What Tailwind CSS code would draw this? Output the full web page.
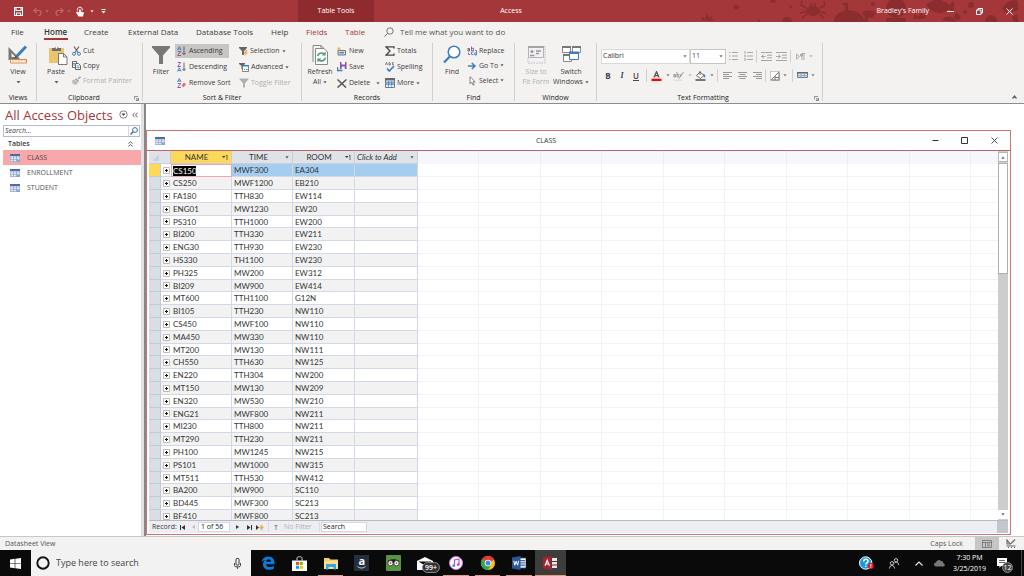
<!DOCTYPE html>
<html lang="en">
  <head>
    <meta charset="UTF-8" />
    <meta name="viewport" content="width=device-width, initial-scale=1.0" />
    <title>Access</title>
    <script src="https://cdn.jsdelivr.net/npm/@tailwindcss/browser@4"></script>
  </head>
  <body class="h-screen overflow-hidden flex flex-col bg-[#f3f2f1] font-['Open_Sans',sans-serif] text-[7px] leading-[10px] text-[#3b3b3b] whitespace-nowrap">
    <!-- shared icons -->
    <svg class="hidden">
      <symbol id="down" viewBox="0 0 5 3"><path d="M0.5 0h4L2.5 2.6z" fill="currentColor" fill-opacity=".8" /></symbol>
      <symbol id="sheet" viewBox="0 0 10 8">
        <path d="M0 0h10v8H0z" fill="#8ea6cc" />
        <path d="M0 0h10v2H0z" fill="#4a6ba3" />
        <path d="M.5 2.500h2.500v1H.5zM3.700 2.500h2.500v1H3.700zM7 2.500h2.500v1H7zM.5 4.300h2.500v1H.5zM3.700 4.300h2.500v1H3.700zM7 4.300h2.500v1H7zM.5 6.200h2.500v1H.5zM3.700 6.200h2.500v1H3.700z" fill="#fff" />
      </symbol>
      <symbol id="launch" viewBox="0 0 6 6"><path d="M.5 4V.5H5M2.500 2.500l2 2M5.500 2.500v3h-3z" fill="none" stroke="#666" stroke-width=".9" /></symbol>
      <symbol id="funnel" viewBox="0 0 20 20"><path d="M1 1h18v1.500l-7 8V19H8v-8.500L1 2.500z" fill="currentColor" /></symbol>
    </svg>

    <!-- title bar -->
    <header class="relative h-[22px] shrink-0 flex items-center bg-[#a4373a] text-white font-medium">
      <svg class="absolute right-0 top-0 w-[330px] h-[22px]" viewBox="0 0 330 22" fill="#8b2c2f">
        <circle cx="42" cy="7" r="2.500" /><circle cx="79" cy="0" r="3" /><circle cx="97" cy="7" r="1.500" /><circle cx="93" cy="22" r="5" /><circle cx="65" cy="21" r="1.500" />
        <path d="M8 20c-1-3 0-4 1-3l2 2 2-6 2 5 4-3-2 4 4 0-5 2z" />
        <ellipse cx="119" cy="11" rx="7" ry="5" /><path d="M112 8l-5-3 1-4M126 8l5-3-1-4M112 12l-6 1M113 14l-5 4M125 14l5 4M126 12l6 1M117 7V3M121 7V3" stroke="#8b2c2f" stroke-width="1.500" fill="none" />
        <path d="M140 20c2-8 8-8 11-9V5h-3V3h6v7c8 0 14 4 16 9l4-4v7h-34z" />
        <path d="M168 13c4-4 10-3 14 0l-4 5h-6z" />
        <circle cx="202" cy="8" r="10" /><circle cx="179" cy="4" r="2" /><path d="M192 18h20v4h-20z" />
        <path d="M219 19l2-6 3 4 4-5 1 4 4-2-3 5z" />
        <path d="M232 5c7-7 17-6 23 0l5-4v12l-5-4c-7 7-18 4-23-4z" />
        <path d="M262 12l5 5-3 4-4-3zM248 20a8 8 0 0 1 14 2z" />
        <circle cx="277" cy="5" r="3" /><circle cx="297" cy="21" r="6" /><circle cx="271" cy="12" r="2" />
        <path d="M308 9c4-9 12-10 16-8v9l-5 2-3-3-4 4zM318 17l5-3 2 8h-5z" />
      </svg>
      <div class="w-[298px] pl-[14px] flex items-center text-[#c97577]">
        <button class="w-[19px]" aria-label="Save">
          <svg class="w-[9px] h-[9px]" viewBox="0 0 9 9"><path d="M.5.5h8v8h-8zM2 .5v3h5v-3M2.500 8.500V6h4v2.500" fill="none" stroke="#fff" stroke-width="1.100" /></svg>
        </button>
        <button class="w-[22px] flex items-center gap-[3px]" aria-label="Undo">
          <svg class="w-[9px] h-[9px]" viewBox="0 0 9 9"><path d="M3.500 1L1 3.500 3.500 6M1 3.500h4.500a2.300 2.300 0 0 1 0 5" fill="none" stroke="#c3686a" stroke-width="1.200" /></svg>
          <svg class="w-[4px] h-[3px]"><use href="#down" /></svg>
        </button>
        <button class="w-[21px] flex items-center gap-[3px]" aria-label="Redo">
          <svg class="w-[9px] h-[9px]" viewBox="0 0 9 9"><path d="M5.500 1L8 3.500 5.500 6M8 3.500H3.500a2.300 2.300 0 0 0 0 5" fill="none" stroke="#c3686a" stroke-width="1.200" /></svg>
          <svg class="w-[4px] h-[3px]"><use href="#down" /></svg>
        </button>
        <button class="w-[25px] flex items-center gap-[6px] text-white" aria-label="Touch mode">
          <svg class="w-[8px] h-[11px]" viewBox="0 0 8 11"><path d="M3 3.500v3L1 5.500 0 6.500 2.500 10.500h4.500L8 6.500 4.800 5.500v-2z" fill="#fff" /><path d="M1.500 4.500a2.500 2.500 0 1 1 4.700 0" fill="none" stroke="#fff" /></svg>
          <svg class="w-[4px] h-[3px]"><use href="#down" /></svg>
        </button>
        <button class="text-white" aria-label="Customize">
          <svg class="w-[5px] h-[5px]" viewBox="0 0 5 5"><path d="M.5 0h4v1h-4zM.5 2h4l-2 2.600z" fill="#fff" /></svg>
        </button>
      </div>
      <div class="w-[76px] h-full flex items-center justify-center bg-[#8f2b2e]">Table Tools</div>
      <div class="w-[274px] text-center">Access</div>
      <div class="relative ml-auto flex items-center">
        <span>Bradley's Family</span>
        <button class="w-[30px] ml-[6px] flex justify-center" aria-label="Minimize"><svg class="w-[7px] h-[7px]" viewBox="0 0 7 7"><path d="M0 3.500h7" stroke="#fff" /></svg></button>
        <button class="w-[29px] flex justify-center" aria-label="Restore"><svg class="w-[7px] h-[7px]" viewBox="0 0 7 7"><path d="M.5 2h4.500v4.500H.5zM2 2V.5h4.500V5H5" fill="none" stroke="#fff" /></svg></button>
        <button class="w-[30px] flex justify-center" aria-label="Close"><svg class="w-[7px] h-[7px]" viewBox="0 0 7 7"><path d="M.5.5l6 6M6.500.5l-6 6" stroke="#fff" /></svg></button>
      </div>
    </header>

    <!-- ribbon tabs -->
    <nav class="h-[21px] shrink-0 flex items-center pl-[11px] pb-[2px] text-[8px]">
      <a href="#" class="w-[33px]">File</a>
      <a href="#" class="relative w-[40px] font-semibold text-[#333]">Home<span class="absolute left-0 -bottom-[3px] w-[24px] h-[2px] bg-[#a4373a]"></span></a>
      <a href="#" class="w-[44px]">Create</a>
      <a href="#" class="w-[68px]">External Data</a>
      <a href="#" class="w-[75px]">Database Tools</a>
      <a href="#" class="w-[35px]">Help</a>
      <a href="#" class="w-[39px] text-[#a4373a]">Fields</a>
      <a href="#" class="w-[39px] text-[#a4373a]">Table</a>
      <label class="flex items-center gap-[6px]">
        <svg class="w-[10px] h-[10px]" viewBox="0 0 10 10"><circle cx="6" cy="4" r="3.200" fill="none" stroke="#666" stroke-width=".9" /><path d="M3.700 6.300L.5 9.500" stroke="#666" /></svg>
        <input class="w-[130px] placeholder:text-[#555]" placeholder="Tell me what you want to do" />
      </label>
    </nav>

    <!-- ribbon -->
    <div class="relative h-[61px] shrink-0 flex border-b border-[#8c8c8c]">
      <section class="w-[37px] h-[58px] border-r border-[#d2d0ce]">
        <div class="h-[50px] flex">
          <button class="w-full h-[42px] pt-[2px] flex flex-col items-center">
            <svg class="w-[20px] h-[19px] shrink-0" viewBox="0 0 20 19">
              <path d="M.5 2v13H13z" fill="#777" /><path d="M3.500 8v4H7.500z" fill="#f3f2f1" />
              <path d="M18 1.500L8.500 11.500" stroke="#3e7ebf" stroke-width="3" /><path d="M7.500 10.500L6 14l3.500-1.500z" fill="#555" />
              <path d="M2.500 14.500h16v3.500h-16z" fill="#fff" stroke="#e0883a" /><path d="M5 15v2M8 15v1.500M11 15v2M14 15v1.500M17 15v1.500" stroke="#e0883a" stroke-width=".8" />
            </svg>
            <span class="mt-[3px]">View</span><svg class="w-[5px] h-[3px] mt-[4px]"><use href="#down" /></svg>
          </button>
        </div>
        <h2 class="text-center text-[#222]">Views</h2>
      </section>

      <section class="relative w-[106px] h-[58px] border-r border-[#d2d0ce]">
        <div class="h-[50px] flex">
          <button class="w-[26px] h-[42px] ml-[6px] pt-[2px] flex flex-col items-center">
            <svg class="w-[20px] h-[20px] shrink-0 ml-[3px]" viewBox="0 0 20 20">
              <path d="M1 3h15v15H1z" fill="#ecc36e" /><path d="M4 3h2.500a2.200 2.200 0 0 1 4 0H13v3H4z" fill="#6d6d6d" /><circle cx="8.500" cy="2.700" r="1" fill="#fff" />
              <path d="M10.500 8.500h5l3.500 3.500v7.500h-8.500z" fill="#fff" stroke="#777" /><path d="M15.500 8.500V12H19" fill="none" stroke="#777" />
            </svg>
            <span class="mt-[2px]">Paste</span><svg class="w-[5px] h-[3px] mt-[4px]"><use href="#down" /></svg>
          </button>
          <div class="ml-[3px] flex flex-col">
            <button class="h-[15px] flex items-center gap-[2px]">
              <svg class="w-[9px] h-[10px]" viewBox="0 0 9 10"><path d="M2 .5l4 6M7 .5L3 6.500" stroke="#666" stroke-width="1.200" /><circle cx="2" cy="7.800" r="1.500" fill="none" stroke="#3e7ebf" /><circle cx="7" cy="7.800" r="1.500" fill="none" stroke="#3e7ebf" /></svg>Cut
            </button>
            <button class="h-[15px] flex items-center gap-[2px]">
              <svg class="w-[9px] h-[9px]" viewBox="0 0 9 9"><path d="M.5.5h4v6h-4z" fill="#fff" stroke="#666" /><path d="M3.500 2.500h3l2 2v4h-5z" fill="#fff" stroke="#666" /><path d="M1 2.500h2M1 4h2M4.500 5h3M4.500 6.700h3" stroke="#3e7ebf" stroke-width=".8" /></svg>Copy
            </button>
            <button class="h-[15px] flex items-center gap-[2px] text-[#b1afad]">
              <svg class="w-[9px] h-[9px]" viewBox="0 0 9 9"><path d="M8 0L9 1.500 6.500 3.500 5.500 2.500z" fill="#aaa" /><path d="M4 2.500l3 2.500-.5 1L3 3.200z" fill="#888" /><path d="M0 4.500l2.500-1 3.500 3L4 9 .5 7.500z" fill="#bbb" /></svg>Format Painter
            </button>
          </div>
        </div>
        <h2 class="w-[94px] text-center text-[#222]">Clipboard</h2>
        <button class="absolute right-[3px] bottom-0" aria-label="Clipboard options"><svg class="w-[5px] h-[5px]"><use href="#launch" /></svg></button>
      </section>

      <section class="w-[159px] h-[58px] border-r border-[#d2d0ce]">
        <div class="h-[50px] flex">
          <button class="w-[26px] h-[42px] ml-[5px] pt-[2px] flex flex-col items-center">
            <svg class="w-[20px] h-[20px] shrink-0 text-[#777]"><use href="#funnel" /></svg>
            <span class="mt-[2px]">Filter</span>
          </button>
          <div class="w-[54px] ml-px pt-px flex flex-col gap-[2px]">
            <button class="h-[14px] pl-[2px] flex items-center gap-[3px] bg-[#c8c6c4]">
              <svg class="w-[9px] h-[10px] shrink-0" viewBox="0 0 9 10"><path d="M.5 4L2.300.5 4 4M1 3h2.500" fill="none" stroke="#3e7ebf" stroke-width=".9" /><path d="M.7 5.500h3L.7 9.500h3.300" fill="none" stroke="#8a4fa8" stroke-width=".9" /><path d="M7 .5v8M5.300 6.700L7 8.700l1.700-2" fill="none" stroke="#555" stroke-width=".9" /></svg>Ascending
            </button>
            <button class="h-[14px] pl-[2px] flex items-center gap-[3px]">
              <svg class="w-[9px] h-[10px] shrink-0" viewBox="0 0 9 10"><path d="M.7.5h3L.7 4.500h3.300" fill="none" stroke="#8a4fa8" stroke-width=".9" /><path d="M.5 9.500L2.300 5.800 4 9.500M1 8.500h2.500" fill="none" stroke="#3e7ebf" stroke-width=".9" /><path d="M7 .5v8M5.300 6.700L7 8.700l1.700-2" fill="none" stroke="#555" stroke-width=".9" /></svg>Descending
            </button>
            <button class="h-[14px] pl-[2px] flex items-center gap-[3px]">
              <svg class="w-[9px] h-[10px] shrink-0" viewBox="0 0 9 10"><path d="M.5 4L2.300.5 4 4M1 3h2.500" fill="none" stroke="#3e7ebf" stroke-width=".9" /><path d="M.7 5.500h3L.7 9.500h3.300" fill="none" stroke="#8a4fa8" stroke-width=".9" /><path d="M4.500 7.500L7 4.500l2 1.700-2.500 3z" fill="#e8677d" /></svg>Remove Sort
            </button>
          </div>
          <div class="ml-[10px] pt-px flex flex-col gap-[2px]">
            <button class="h-[14px] flex items-center gap-[2px]">
              <svg class="w-[9px] h-[9px]" viewBox="0 0 9 9"><path d="M0 0h8v1L5 4v4H3V4L0 1z" fill="#666" /><path d="M7 3L4.500 6.500h2L5 9.500 9 5.500H7L8.500 3z" fill="#f0a23c" /></svg>Selection<svg class="w-[4px] h-[3px]"><use href="#down" /></svg>
            </button>
            <button class="h-[14px] flex items-center gap-[2px]">
              <svg class="w-[10px] h-[9px]" viewBox="0 0 10 9"><path d="M0 0h6v1L4 3v3H2.500V3L0 1z" fill="#666" /><path d="M3.500 2.500h6v6h-6z" fill="#fff" stroke="#666" stroke-width=".8" /><path d="M3 2h7v1.500H3z" fill="#3e7ebf" /><path d="M5 6.500h1M7 6.500h1.500" stroke="#3e7ebf" /></svg>Advanced<svg class="w-[4px] h-[3px]"><use href="#down" /></svg>
            </button>
            <button class="h-[14px] flex items-center gap-[2px] text-[#b1afad]">
              <svg class="w-[10px] h-[10px]"><use href="#funnel" /></svg>Toggle Filter
            </button>
          </div>
        </div>
        <h2 class="text-center text-[#222]">Sort &amp; Filter</h2>
      </section>

      <section class="w-[131px] h-[58px] border-r border-[#d2d0ce]">
        <div class="h-[50px] flex">
          <button class="w-[28px] h-[45px] ml-[4px] pt-[2px] flex flex-col items-center">
            <svg class="w-[17px] h-[20px] shrink-0" viewBox="0 0 17 20">
              <path d="M1 17V.5h8l3 3M9 .5V4" fill="none" stroke="#888" /><path d="M3.500 3.500H12l3.500 3.500v12.500h-12z" fill="#fff" stroke="#888" />
              <path d="M5.500 11a4 4 0 0 1 6.500-2M13.500 12.500a4 4 0 0 1-6.500 2.500" fill="none" stroke="#4f9b7c" stroke-width="1.700" /><path d="M13.700 6.500v4H9.800zM5.300 17.500v-4h4z" fill="#4f9b7c" />
            </svg>
            <span class="mt-[2px]">Refresh</span><span class="flex items-center gap-[2px]">All<svg class="w-[4px] h-[3px]"><use href="#down" /></svg></span>
          </button>
          <div class="w-[48px] ml-[3px] pt-px flex flex-col gap-[2px]">
            <button class="h-[14px] flex items-center gap-[3px]">
              <svg class="w-[9px] h-[9px]" viewBox="0 0 9 9"><path d="M1 3.500h7.500v4.500H1z" fill="#cfe0f1" stroke="#666" stroke-width=".9" /><path d="M2.500 5.700h4.500" stroke="#3e7ebf" stroke-width="1.300" /><path d="M2 0v4M0 2h4M.6.6l2.800 2.800M3.400.6L.6 3.400" stroke="#eaa64b" stroke-width=".7" /></svg>New
            </button>
            <button class="h-[14px] flex items-center gap-[2px]">
              <svg class="w-[10px] h-[10px]" viewBox="0 0 10 10"><path d="M3 0h6.500v7H3z" fill="#8750a8" /><path d="M4.500 0h3.500v2.500H4.500zM4.700 4.500h3V7h-3z" fill="#fff" /><path d="M.5 5v3.500h5" fill="none" stroke="#3e7ebf" stroke-width="1.400" /></svg>Save
            </button>
            <button class="h-[14px] flex items-center gap-[2px]">
              <svg class="w-[10px] h-[9px]" viewBox="0 0 10 9"><path d="M.5.5l8.500 8M9.500.5L.5 8.500" stroke="#555" stroke-width="1.500" /></svg>Delete<svg class="w-[4px] h-[3px] ml-[4px] shrink-0"><use href="#down" /></svg>
            </button>
          </div>
          <div class="pt-px flex flex-col gap-[2px]">
            <button class="h-[14px] flex items-center gap-[2px]">
              <svg class="w-[10px] h-[10px]" viewBox="0 0 10 10"><path d="M9 2.500V.8H1L5 5 1 9.200h8V7.500" fill="none" stroke="#444" stroke-width="1.300" /></svg>Totals
            </button>
            <button class="h-[14px] flex items-center gap-[2px]">
              <svg class="w-[10px] h-[10px]" viewBox="0 0 10 10"><path d="M.5 3L1.500.5 2.500 3M4 .5v2.500h1.300L5.500 1.700 4.800.5zM9 .7H7.500v2H9" fill="none" stroke="#555" stroke-width=".7" /><path d="M2 6.500L4.300 9 9 4" fill="none" stroke="#3e7ebf" stroke-width="1.700" /></svg>Spelling
            </button>
            <button class="h-[14px] flex items-center gap-[2px]">
              <svg class="w-[10px] h-[10px]" viewBox="0 0 10 10"><path d="M.5.5h9v9h-9z" fill="#fff" stroke="#777" /><path d="M0 0h10v2.500H0z" fill="#666" /><path d="M1 4h8v2.500H1z" fill="#8db9e2" /><path d="M0 4h10M0 6.700h10M3.500 3v7M6.700 3v7" stroke="#3e7ebf" stroke-width=".7" /></svg>More<svg class="w-[4px] h-[3px]"><use href="#down" /></svg>
            </button>
          </div>
        </div>
        <h2 class="text-center text-[#222]">Records</h2>
      </section>

      <section class="w-[82px] h-[58px] border-r border-[#d2d0ce]">
        <div class="h-[50px] flex">
          <button class="w-[26px] h-[42px] ml-[6px] pt-[2px] flex flex-col items-center">
            <svg class="w-[18px] h-[19px] shrink-0" viewBox="0 0 18 19"><circle cx="11" cy="7" r="5.800" fill="#fff" stroke="#3e7ebf" stroke-width="1.500" /><path d="M6.800 11.500L1 17.500" stroke="#3e7ebf" stroke-width="2.300" /></svg>
            <span class="mt-[3px]">Find</span>
          </button>
          <div class="ml-[2px] flex flex-col">
            <button class="h-[15px] flex items-center gap-[2px]">
              <svg class="w-[10px] h-[10px]" viewBox="0 0 10 10"><path d="M.5 2.500h2V5H.8V3.800h1.700" fill="none" stroke="#555" stroke-width=".8" /><path d="M4.500.5v4.300h2v-2.500h-2M1.500 6.500v2h1.500" fill="none" stroke="#8750a8" stroke-width=".9" /><path d="M6.500 6h-2v2.500h2M8 4.500h1.500V9H7.800V7h1.500" fill="none" stroke="#3e7ebf" stroke-width=".9" /></svg>Replace
            </button>
            <button class="h-[15px] flex items-center gap-[2px]">
              <svg class="w-[10px] h-[8px]" viewBox="0 0 10 8"><path d="M1 4h6.500M4.800 1L8 4 4.800 7" fill="none" stroke="#3e7ebf" stroke-width="1.500" /></svg>Go To<svg class="w-[4px] h-[3px]"><use href="#down" /></svg>
            </button>
            <button class="h-[15px] flex items-center gap-[2px]">
              <svg class="w-[10px] h-[10px]" viewBox="0 0 10 10"><path d="M3 .7v7l1.700-1.500 1.300 3 1.200-.6-1.200-2.800h2.200z" fill="#fff" stroke="#666" stroke-width=".8" /></svg>Select<svg class="w-[4px] h-[3px]"><use href="#down" /></svg>
            </button>
          </div>
        </div>
        <h2 class="text-center text-[#222]">Find</h2>
      </section>

      <section class="w-[82px] h-[58px] border-r border-[#d2d0ce]">
        <div class="h-[50px] flex">
          <button class="w-[32px] h-[45px] ml-[5px] pt-[2px] flex flex-col items-center text-[#b1afad]">
            <svg class="w-[19px] h-[19px] shrink-0" viewBox="0 0 19 19"><path d="M1.500 1.500h15v11h-15z" fill="#f3eff3" stroke="#b5b3b5" /><path d="M1 1h16v2H1z" fill="#a5a3a5" /><circle cx="5" cy="6.500" r="1.500" fill="#999" /><path d="M3 10.500h4.500M9 6h5M9 8.500h3" stroke="#999" stroke-width="1.300" /><path d="M18 1v17H1V13" fill="none" stroke="#c3a9c6" stroke-dasharray="1.500 1.200" /></svg>
            <span class="mt-[3px]">Size to</span><span>Fit Form</span>
          </button>
          <button class="w-[38px] h-[45px] pt-[2px] flex flex-col items-center">
            <svg class="w-[19px] h-[19px] shrink-0" viewBox="0 0 19 19"><path d="M.5 1.500h8v6h-8zM10.500 1.500h8v6h-8zM1.500 9.500h8v7h-8z" fill="#fff" stroke="#888" /><path d="M0 1h9v2H0zM10 1h9v2h-9zM1 9h8v2H1z" fill="#777" /><path d="M7.500 7.500h9v7h-9z" fill="#fff" stroke="#3e7ebf" /><path d="M7 6.500h10V9H7z" fill="#3e7ebf" /></svg>
            <span class="mt-[3px]">Switch</span><span class="flex items-center gap-[2px]">Windows<svg class="w-[4px] h-[3px]"><use href="#down" /></svg></span>
          </button>
        </div>
        <h2 class="text-center text-[#222]">Window</h2>
      </section>

      <section class="relative w-[226px] h-[58px] border-r border-[#d2d0ce]">
        <div class="h-[50px] pl-[4px] pt-[5px] flex flex-col gap-[5px]">
          <div class="flex items-center h-[16px] text-[#a8a6a4]">
            <div class="relative w-[89px]">
              <select aria-label="Font" class="appearance-none w-full h-[15px] pl-px bg-white border border-[#dcdad8] text-[#333]"><option>Calibri</option></select>
              <svg class="absolute right-[3px] top-[6px] w-[4px] h-[3px] text-[#555]"><use href="#down" /></svg>
            </div>
            <div class="relative w-[36px]">
              <select aria-label="Font size" class="appearance-none w-full h-[15px] pl-px bg-white border border-[#c8c6c4] text-[#60386f]"><option>11</option></select>
              <svg class="absolute right-[3px] top-[6px] w-[4px] h-[3px] text-[#555]"><use href="#down" /></svg>
            </div>
            <button class="w-[15px] flex justify-center" aria-label="Bullets"><svg class="w-[9px] h-[10px]" viewBox="0 0 9 10"><path d="M0 1.500h1.500M0 5h1.500M0 8.500h1.500M3 1.500h6M3 5h6M3 8.500h6" stroke="currentColor" /></svg></button>
            <button class="w-[15px] flex justify-center" aria-label="Numbering"><svg class="w-[9px] h-[10px]" viewBox="0 0 9 10"><path d="M1 0v2.700M.3 4.200h1v1.500h-1M.3 7.500h1v2h-1M3 1.500h6M3 5h6M3 8.500h6" fill="none" stroke="currentColor" /></svg></button>
            <span class="w-px h-[13px] mr-[2px] bg-[#d2d0ce]"></span>
            <button class="w-[15px] flex justify-center" aria-label="Decrease indent"><svg class="w-[11px] h-[9px]" viewBox="0 0 11 9"><path d="M0 .5h11M6 3.200h5M6 5.800h5M0 8.500h11M0 4.500h4.500M2.500 2.500l-2 2 2 2" fill="none" stroke="currentColor" /></svg></button>
            <button class="w-[15px] flex justify-center" aria-label="Increase indent"><svg class="w-[11px] h-[9px]" viewBox="0 0 11 9"><path d="M0 .5h11M6 3.200h5M6 5.800h5M0 8.500h11M0 4.500h4.500M2.500 2.500l2 2-2 2" fill="none" stroke="currentColor" /></svg></button>
            <span class="w-px h-[13px] mx-px bg-[#d2d0ce]"></span>
            <button class="w-[21px] pl-[4px] flex items-center justify-between" aria-label="Text direction"><svg class="w-[9px] h-[7px]" viewBox="0 0 9 7"><path d="M.5 1v5l3-2.500zM6 7V.5H9M8 7V.5" fill="none" stroke="currentColor" stroke-width=".9" /><circle cx="5.500" cy="2" r="1.500" fill="currentColor" /></svg><svg class="w-[4px] h-[3px]"><use href="#down" /></svg></button>
          </div>
          <div class="flex items-center h-[13px] text-[#666]">
            <button class="w-[14px] font-bold text-[8px] text-[#444]">B</button>
            <button class="w-[14px] font-bold italic text-[8px] text-[#444] font-['Liberation_Serif',serif]">I</button>
            <button class="w-[14px] font-semibold underline text-[8px] text-[#444]">U</button>
            <span class="w-px h-[13px] ml-[3px] mr-[4px] bg-[#d2d0ce]"></span>
            <button class="w-[22px] flex items-center gap-[4px]" aria-label="Font color"><svg class="w-[11px] h-[10px]" viewBox="0 0 11 10"><path d="M3 6.500L5.500.7 8 6.500M4 4.700h3" fill="none" stroke="#555" stroke-width="1.300" /><path d="M.5 7.700h10V10H.5z" fill="#f00" /></svg><svg class="w-[4px] h-[3px]"><use href="#down" /></svg></button>
            <button class="w-[22px] flex items-center gap-[4px] text-[#b1afad]" aria-label="Highlight"><svg class="w-[11px] h-[10px]" viewBox="0 0 11 10"><path d="M.5 3.500h2V6H.8V4.800h1.700M4 1v5h1.700V3.500H4M7 3l1 2.500M10.500 1L6 7.500" fill="none" stroke="#999" /><path d="M.5 8.500h9V10h-9z" fill="#e3e1df" /></svg><svg class="w-[4px] h-[3px]"><use href="#down" /></svg></button>
            <button class="w-[22px] flex items-center gap-[4px]" aria-label="Fill color"><svg class="w-[11px] h-[10px]" viewBox="0 0 11 10"><path d="M5 1l4 3.500L5.500 7.500 1.500 4.500z" fill="#fff" stroke="#666" /><path d="M5 0v4" stroke="#666" /><path d="M8.500 2.500c2 1 2 3 1.500 4.500L8.500 5z" fill="#3e7ebf" /><path d="M.5 8h10v2H.5z" fill="#777" /></svg><svg class="w-[4px] h-[3px]"><use href="#down" /></svg></button>
            <span class="w-px h-[13px] mr-[2px] bg-[#d2d0ce]"></span>
            <button class="w-[15px] flex justify-center" aria-label="Align left"><svg class="w-[9px] h-[7px]" viewBox="0 0 9 7"><path d="M0 .5h9M0 2.500h6M0 4.500h9M0 6.500h6" stroke="#999" /></svg></button>
            <button class="w-[15px] flex justify-center" aria-label="Center"><svg class="w-[9px] h-[7px]" viewBox="0 0 9 7"><path d="M0 .5h9M1.500 2.500h6M0 4.500h9M1.500 6.500h6" stroke="#999" /></svg></button>
            <button class="w-[15px] flex justify-center" aria-label="Align right"><svg class="w-[9px] h-[7px]" viewBox="0 0 9 7"><path d="M0 .5h9M3 2.500h6M0 4.500h9M3 6.500h6" stroke="#999" /></svg></button>
            <span class="w-px h-[13px] mr-[4px] bg-[#d2d0ce]"></span>
            <button class="w-[22px] flex items-center gap-[3px]" aria-label="Gridlines"><svg class="w-[10px] h-[10px]" viewBox="0 0 10 10"><path d="M.5.5h9v9h-9z" fill="#fff" stroke="#999" stroke-dasharray="1 1" /><path d="M1 9L9 1M9 2v7H2M5 5v4M5 6.500h4" fill="none" stroke="#777" /></svg><svg class="w-[4px] h-[3px]"><use href="#down" /></svg></button>
            <span class="w-px h-[13px] mr-[4px] bg-[#d2d0ce]"></span>
            <button class="w-[22px] flex items-center gap-[3px]" aria-label="Alternate row color"><svg class="w-[11px] h-[10px]" viewBox="0 0 11 10"><path d="M.5 1.500h10v5H.5z" fill="#cfe0f1" stroke="#777" /><path d="M0 1h11v1.500H0z" fill="#666" /><path d="M0 4.500h11M4 2v5M7.500 2v5" stroke="#7c9cc0" stroke-width=".7" /></svg><svg class="w-[4px] h-[3px]"><use href="#down" /></svg></button>
          </div>
        </div>
        <h2 class="w-[212px] text-center text-[#222]">Text Formatting</h2>
        <button class="absolute right-[3px] bottom-0" aria-label="Text formatting options"><svg class="w-[5px] h-[5px]"><use href="#launch" /></svg></button>
      </section>
      <button class="ml-auto mr-[7px] self-end mb-[4px]" aria-label="Collapse the ribbon"><svg class="w-[5px] h-[4px]" viewBox="0 0 5 4"><path d="M.5 3.500l2-2.500 2 2.500" fill="none" stroke="#666" stroke-width="1.300" /></svg></button>
    </div>

    <!-- workspace -->
    <main class="flex-1 min-h-0 flex bg-white">
      <aside class="w-[141px] shrink-0">
        <div class="h-[21px] pl-[5px] flex items-center">
          <h1 class="w-[114px] text-[13px] leading-[20px] text-[#a4373a]">All Access Objects</h1>
          <button class="w-[13px]" aria-label="Choose objects"><svg class="w-[9px] h-[9px]" viewBox="0 0 9 9"><circle cx="4.500" cy="4.500" r="3.700" fill="#fff" stroke="#777" stroke-width=".9" /><path d="M2.500 3.500h4l-2 2.500z" fill="#444" /></svg></button>
          <button aria-label="Close pane"><svg class="w-[6px] h-[6px]" viewBox="0 0 6 6"><path d="M2.700.7L.7 3l2 2.300M5.500.7L3.500 3l2 2.300" fill="none" stroke="#555" stroke-width=".9" /></svg></button>
        </div>
        <label class="ml-[3px] mr-px h-[12px] flex items-center border border-[#b4bccb] bg-white">
          <input class="flex-1 min-w-0 pl-px italic placeholder:text-[#444]" placeholder="Search..." />
          <span class="h-full w-[11px] flex items-center justify-center border-l border-[#d5dbe5]"><svg class="w-[8px] h-[8px]" viewBox="0 0 8 8"><circle cx="5" cy="3" r="2.400" fill="#fff" stroke="#44679f" /><path d="M3.200 4.800L.5 7.500" stroke="#44679f" stroke-width="1.400" /></svg></span>
        </label>
        <button class="w-full h-[13px] pl-[8px] pr-[8px] flex items-center justify-between font-semibold">Tables
          <svg class="w-[5px] h-[6px]" viewBox="0 0 5 6"><path d="M.5 2.500l2-1.700 2 1.700M.5 5.300l2-1.700 2 1.700" fill="none" stroke="#444" stroke-width=".9" /></svg>
        </button>
        <a href="#" class="h-[15px] ml-[3px] pl-[7px] flex items-center gap-[7px] bg-[#f6a8ab] text-[#5f4548]"><svg class="w-[10px] h-[8px]"><use href="#sheet" /></svg>CLASS</a>
        <a href="#" class="h-[15px] ml-[3px] pl-[7px] flex items-center gap-[7px] text-[#555]"><svg class="w-[10px] h-[8px]"><use href="#sheet" /></svg>ENROLLMENT</a>
        <a href="#" class="h-[15px] ml-[3px] pl-[7px] flex items-center gap-[7px] text-[#555]"><svg class="w-[10px] h-[8px]"><use href="#sheet" /></svg>STUDENT</a>
      </aside>
      <div class="w-[5px] shrink-0 bg-[#e1e1e1] border-r-2 border-[#85878b]"></div>

      <div class="flex-1 min-w-0 pt-[26px] pr-[13px] pb-px">
        <section class="h-full flex flex-col border border-[#c9757a] bg-white">
          <div class="relative h-[20px] shrink-0 flex items-center border-b border-[#b9666a]">
            <svg class="w-[10px] h-[8px] ml-[8px]"><use href="#sheet" /></svg>
            <h2 class="w-[762px] text-center text-[#333]">CLASS</h2>
            <div class="absolute right-0 top-0 h-full flex items-center">
              <button class="w-[30px] flex justify-center" aria-label="Minimize window"><svg class="w-[7px] h-[7px]" viewBox="0 0 7 7"><path d="M.5 3.500h6" stroke="#333" /></svg></button>
              <button class="w-[29px] flex justify-center" aria-label="Maximize window"><svg class="w-[7px] h-[7px]" viewBox="0 0 7 7"><path d="M.5.5h6v6h-6z" fill="none" stroke="#333" /></svg></button>
              <button class="w-[31px] flex justify-center" aria-label="Close window"><svg class="w-[7px] h-[7px]" viewBox="0 0 7 7"><path d="M.5.5l6 6M6.500.5l-6 6" stroke="#444" stroke-width=".9" /></svg></button>
            </div>
          </div>

          <div class="flex-1 min-h-0 flex ml-[2px] mr-[2px]">
            <div class="flex-1 min-w-0 overflow-hidden">
              <table class="w-full table-fixed border-separate border-spacing-0 text-[8px] leading-[10px] font-['Lato',sans-serif] text-[#333]">
                <colgroup>
                  <col class="w-[12px]" /><col class="w-[10px]" /><col class="w-[61px]" /><col class="w-[61px]" /><col class="w-[62px]" /><col class="w-[63px]" />
                  <col class="w-[61px]" /><col class="w-[62px]" /><col class="w-[61px]" /><col class="w-[62px]" /><col class="w-[61px]" /><col class="w-[62px]" /><col class="w-[61px]" /><col class="w-[62px]" /><col class="w-[61px]" /><col />
                </colgroup>
                <thead>
                  <tr class="h-[13px] bg-[#dfe3e8]">
                    <th class="p-0 border-b border-[#c9ced8]"><svg class="w-[7px] h-[7px] ml-[3px]" viewBox="0 0 7 7"><path d="M7 0v7H0z" fill="#ccd2db" /></svg></th>
                    <th class="p-0 border-r border-b border-[#c9ced8]"></th>
                    <th class="p-0 font-normal border-r border-b border-[#c9ced8] bg-[#fdd95a]">
                      <span class="flex items-center pr-[3px]"><span class="flex-1">NAME</span><svg class="w-[6px] h-[6px]" viewBox="0 0 6 6"><path d="M0 2h3.500L1.800 4z" fill="#333" /><path d="M5 1v5M4 2L5 1" fill="none" stroke="#333" stroke-width=".7" /></svg></span>
                    </th>
                    <th class="p-0 font-normal border-r border-b border-[#c9ced8]">
                      <span class="flex items-center pr-[3px]"><span class="flex-1">TIME</span><svg class="w-[4px] h-[3px]"><use href="#down" /></svg></span>
                    </th>
                    <th class="p-0 font-normal border-r border-b border-[#c9ced8]">
                      <span class="flex items-center pr-[3px]"><span class="flex-1">ROOM</span><svg class="w-[6px] h-[6px]" viewBox="0 0 6 6"><path d="M0 2h3.500L1.800 4z" fill="#333" /><path d="M5 1v5M4 2L5 1" fill="none" stroke="#333" stroke-width=".7" /></svg></span>
                    </th>
                    <th class="p-0 font-normal italic border-r border-b border-[#c9ced8]">
                      <span class="flex items-center justify-between pl-[2px] pr-[3px]">Click to Add<svg class="w-[4px] h-[3px]"><use href="#down" /></svg></span>
                    </th>
                    <th class="bg-[#f6f7fd] border-r border-[#ecedf3]"></th><th class="bg-[#f6f7fd] border-r border-[#ecedf3]"></th><th class="bg-[#f6f7fd] border-r border-[#ecedf3]"></th><th class="bg-[#f6f7fd] border-r border-[#ecedf3]"></th><th class="bg-[#f6f7fd] border-r border-[#ecedf3]"></th>
                    <th class="bg-[#f6f7fd] border-r border-[#ecedf3]"></th><th class="bg-[#f6f7fd] border-r border-[#ecedf3]"></th><th class="bg-[#f6f7fd] border-r border-[#ecedf3]"></th><th class="bg-[#f6f7fd] border-r border-[#ecedf3]"></th><th class="bg-[#f6f7fd]"></th>
                  </tr>
                </thead>
                <tbody id="rows"></tbody>
              </table>
            </div>
            <div class="w-[10px] shrink-0 flex flex-col bg-[#cdcdcd]">
              <button class="h-[10px] mt-px flex items-center justify-center bg-white border border-[#b5b5b5]" aria-label="Scroll up"><svg class="w-[4px] h-[3px] rotate-180"><use href="#down" /></svg></button>
              <div class="h-[111px] mt-px bg-white border border-[#b0b0b0]"></div>
              <button class="h-[9px] mt-auto mb-px flex items-center justify-center bg-white" aria-label="Scroll down"><svg class="w-[4px] h-[3px]"><use href="#down" /></svg></button>
            </div>
          </div>

          <!-- record navigation -->
          <div class="h-[13px] mb-px shrink-0 mx-[2px] flex items-center border-t border-[#b5bac5] bg-[#eceef2]">
            <span class="w-[31px] pl-[3px]">Record:</span>
            <button class="w-[9px]" aria-label="First record"><svg class="w-[5px] h-[5px]" viewBox="0 0 5 5"><path d="M.5 0v5" stroke="#333" /><path d="M5 0v5L1.500 2.500z" fill="#333" /></svg></button>
            <button class="w-[9px] flex justify-center" aria-label="Previous record"><svg class="w-[3px] h-[4px]" viewBox="0 0 3 4"><path d="M3 0v4L0 2z" fill="#bbb" /></svg></button>
            <input class="w-[32px] h-[10px] pl-[2px] bg-white border border-[#d5d8df] text-[#222]" aria-label="Current record" value="1 of 56" />
            <button class="w-[14px] flex justify-center" aria-label="Next record"><svg class="w-[3px] h-[4px]" viewBox="0 0 3 4"><path d="M0 0v4l3-2z" fill="#333" /></svg></button>
            <button class="w-[10px] flex justify-center" aria-label="Last record"><svg class="w-[5px] h-[5px]" viewBox="0 0 5 5"><path d="M4.500 0v5" stroke="#333" /><path d="M0 0v5l3.500-2.500z" fill="#333" /></svg></button>
            <button class="w-[12px] flex justify-center" aria-label="New record"><svg class="w-[8px] h-[7px]" viewBox="0 0 8 7"><path d="M0 1v5l3-2.500z" fill="#333" /><path d="M5.500.5v6M3 3.500h5M4 1.500l3 4M7 1.500l-3 4" stroke="#eaa64b" stroke-width=".8" /></svg></button>
            <button class="w-[52px] pl-[5px] ml-[2px] mr-px flex items-center gap-[5px] border-x border-[#dadce2] text-[#b1b1b1]"><svg class="w-[5px] h-[5px]" viewBox="0 0 5 5"><path d="M0 0h4L2.500 2v3H1.500V2zM3.500 4.500h1.500" fill="#999" /></svg>No Filter</button>
            <input class="w-[46px] h-[10px] pl-px bg-white border border-[#d5d8df] placeholder:text-[#222]" aria-label="Search records" placeholder="Search" />
            <span class="w-[11px] h-full ml-auto bg-[#c3c6cd]"></span>
          </div>
        </section>
      </div>
    </main>

    <!-- status bar -->
    <div class="h-[14px] shrink-0 pl-[5px] pr-px flex items-center border-t border-[#c8c8c8] text-[#555]">
      <span>Datasheet View</span>
      <span class="ml-auto mr-[12px]">Caps Lock</span>
      <button class="w-[24px] h-full flex items-center justify-center bg-[#c8c6c4]" aria-label="Datasheet View"><svg class="w-[10px] h-[8px]" viewBox="0 0 10 8"><path d="M.5.5h9v7h-9zM.5 2.500h9M3.500 2.500v5M5 4h3M5 5.700h3" fill="none" stroke="#777" stroke-width=".9" /></svg></button>
      <button class="w-[24px] flex items-center justify-center" aria-label="Design View"><svg class="w-[10px] h-[9px]" viewBox="0 0 10 9"><path d="M1 1v4h3zM9 .5L4.500 5M.5 7h9M2 8.500h1M5 8.500h1M8 8.500h1" fill="none" stroke="#666" stroke-width="1.100" /></svg></button>
    </div>

    <!-- taskbar -->
    <footer class="h-[26px] shrink-0 flex bg-[#0a0a0a] text-white">
      <button class="w-[31px] flex items-center justify-center" aria-label="Start"><svg class="w-[11px] h-[11px]" viewBox="0 0 11 11"><path d="M0 1.500l4.700-.7v4.400H0zM5.300.7L11 0v5.200H5.300zM0 5.800h4.700v4.400L0 9.500zM5.300 5.800H11V11l-5.700-.7z" fill="#fff" /></svg></button>
      <label class="w-[220px] pl-[5px] pr-[10px] flex items-center gap-[6px] bg-[#f2f2f2] text-[9px]">
        <svg class="w-[14px] h-[14px] shrink-0" viewBox="0 0 14 14"><circle cx="7" cy="7" r="5.700" fill="none" stroke="#111" stroke-width="1.900" /></svg>
        <input class="flex-1 min-w-0 text-[#333] placeholder:text-[#444]" placeholder="Type here to search" />
        <svg class="w-[7px] h-[11px] shrink-0" viewBox="0 0 7 11"><rect x="2" y=".5" width="3" height="6.500" rx="1" fill="#fff" stroke="#333" /><path d="M.5 5v2.500a1.500 1.500 0 0 0 1.500 1.300h3a1.500 1.500 0 0 0 1.500-1.300V5M3.500 9v2" fill="none" stroke="#333" stroke-width=".9" /></svg>
      </label>
      <div class="w-[315px] pl-px flex">
        <button class="flex-1 flex items-center justify-center" aria-label="Edge"><svg class="w-[14px] h-[14px]" viewBox="0 0 14 14"><path d="M.5 6.500C1.200 2.500 4 .5 7.300.5c4 0 6.200 2.800 6.200 6.200v1.500H5c.2 2 1.800 2.800 3.800 2.800 1.500 0 2.900-.4 4-1.100v2.800c-1.300.8-3 1.100-4.600 1.100-3.700 0-6.200-2.200-6.200-5.400 0-2 1-3.700 2.700-4.600C2.700 4.300 1.300 5.200.5 6.500zM5.100 5.800h4.700c0-1.500-.7-2.500-2.200-2.500-1.400 0-2.200 1-2.500 2.500z" fill="#0a7bd8" /></svg></button>
        <button class="flex-1 flex items-center justify-center" aria-label="Store"><svg class="w-[15px] h-[15px]" viewBox="0 0 15 15"><path d="M0 4.500h15v10.500H0z" fill="#fff" /><path d="M5 4.500V2.500C5 1 6 .7 7.500.7S10 1 10 2.500v2" fill="none" stroke="#ddd" /><path d="M4 6h3v3H4z" fill="#f25022" /><path d="M7.800 6h3v3h-3z" fill="#7fba00" /><path d="M4 9.800h3v3H4z" fill="#00a4ef" /><path d="M7.800 9.800h3v3h-3z" fill="#ffb900" /></svg></button>
        <button class="flex-1 flex items-center justify-center relative" aria-label="File Explorer"><svg class="w-[14px] h-[13px]" viewBox="0 0 14 13"><path d="M0 1h5l1.500 1.500H14V12H0z" fill="#f3cf6b" /><path d="M0 4h14v8H0z" fill="#fbe094" /><path d="M2 12.500V7h10v5.500H9.500V10h-5v2.500z" fill="#35a6e0" /></svg><span class="absolute inset-x-[3px] bottom-0 h-px bg-[#e59a80]"></span></button>
        <button class="flex-1 flex items-center justify-center" aria-label="Amazon"><span class="w-[15px] h-[16px] flex flex-col items-center bg-[#232f3e] text-[11px] leading-[11px] font-bold">a<svg class="w-[9px] h-[3px]" viewBox="0 0 9 3"><path d="M.5.5c2.500 2 5.500 2 8 0" fill="none" stroke="#ddd" /></svg></span></button>
        <button class="flex-1 flex items-center justify-center" aria-label="TripAdvisor"><svg class="w-[15px] h-[16px]" viewBox="0 0 15 16"><rect width="15" height="16" rx="1" fill="#589442" /><path d="M1.500 6c3-2.500 9-2.500 12 0l-2 2h-8z" fill="#222" /><circle cx="4.500" cy="8.200" r="2.600" fill="#fff" stroke="#222" stroke-width=".8" /><circle cx="10.500" cy="8.200" r="2.600" fill="#fff" stroke="#222" stroke-width=".8" /><circle cx="4.500" cy="8.200" r=".9" fill="#c33" /><circle cx="10.500" cy="8.200" r=".9" fill="#393" /></svg></button>
        <button class="flex-1 flex items-center justify-center relative" aria-label="Mail"><svg class="w-[16px] h-[13px]" viewBox="0 0 16 13"><path d="M0 4l8-4 8 4v9H0z" fill="#fff" /><path d="M1.500 4.500h13L8 8.500z" fill="#0a0a0a" /></svg><span class="absolute left-[13px] top-[12px] px-[2px] rounded-full bg-[#333] border border-[#888] leading-[9px] font-semibold">99+</span></button>
        <button class="flex-1 flex items-center justify-center relative" aria-label="iTunes"><svg class="w-[14px] h-[14px]" viewBox="0 0 14 14"><circle cx="7" cy="7" r="6.500" fill="#fff" stroke="#d77be0" /><path d="M5.500 9.500V4L10 3v5.500" fill="none" stroke="#b052d8" stroke-width="1.200" /><circle cx="4.700" cy="9.700" r="1.400" fill="#3d8cf0" /><circle cx="9.200" cy="8.700" r="1.400" fill="#e84b8a" /></svg><span class="absolute inset-x-[3px] bottom-0 h-px bg-[#e59a80]"></span></button>
        <button class="flex-1 flex items-center justify-center relative" aria-label="Chrome"><svg class="w-[14px] h-[14px]" viewBox="0 0 14 14"><circle cx="7" cy="7" r="7" fill="#fbc116" /><path d="M7 7L.9 3.500A7 7 0 0 1 13.100 3.500z" fill="#e33b2e" /><path d="M7 7L.9 3.500A7 7 0 0 0 7 14l3-5.200z" fill="#2da94f" /><path d="M7 3.500h6.100L7 7z" fill="#e33b2e" /><circle cx="7" cy="7" r="3.300" fill="#fff" /><circle cx="7" cy="7" r="2.500" fill="#4285f4" /></svg><span class="absolute inset-x-[3px] bottom-0 h-px bg-[#e59a80]"></span></button>
        <button class="flex-1 flex items-center justify-center relative" aria-label="Word"><svg class="w-[14px] h-[14px]" viewBox="0 0 14 14"><path d="M7 2h7v10H7z" fill="#fff" stroke="#2b579a" stroke-width=".8" /><path d="M8 4.500h5M8 6.200h5M8 8h5M8 9.700h5" stroke="#2b579a" stroke-width=".9" /><path d="M0 1.500L8.500 0v14L0 12.500z" fill="#2b579a" /><path d="M1.800 4.800l1 4.400 1.400-4 1.400 4 1-4.400" fill="none" stroke="#fff" /></svg><span class="absolute inset-x-[3px] bottom-0 h-px bg-[#e59a80]"></span></button>
        <button class="flex-1 flex items-center justify-center relative bg-[#3d3d3d]" aria-label="Access"><svg class="w-[14px] h-[14px]" viewBox="0 0 14 14"><path d="M9 2h5v3H9zM9 6h5v2.500H9zM9 9.500h5V12H9z" fill="#f3e3e3" /><path d="M0 1.500L8.500 0v14L0 12.500z" fill="#a4262c" /><path d="M2 9.700l2.200-5.400 2.200 5.400M2.800 8h2.800" fill="none" stroke="#fff" stroke-width="1.100" /></svg><span class="absolute inset-x-0 bottom-0 h-px bg-[#e59a80]"></span></button>
      </div>
      <div class="ml-auto flex items-center">
        <button class="w-[27px] flex justify-center" aria-label="Help"><svg class="w-[15px] h-[14px]" viewBox="0 0 15 14"><circle cx="6.700" cy="7" r="6.200" fill="#1a9ad6" stroke="#fff" /><path d="M4.700 5.500c0-3 4.300-2.700 4.300-.3C9 7 6.900 6.800 6.900 8.500M6.900 9.700v1.300" fill="none" stroke="#fff" stroke-width="1.500" /><circle cx="11.800" cy="10" r="3" fill="#e01b24" /><path d="M11.800 8.200v2.300M11.800 11v.8" stroke="#fff" /></svg></button>
        <button class="w-[27px] flex justify-center" aria-label="People"><svg class="w-[10px] h-[11px]" viewBox="0 0 10 11"><circle cx="7" cy="2.300" r="1.700" fill="none" stroke="#ddd" stroke-width=".9" /><circle cx="3" cy="5.300" r="1.700" fill="none" stroke="#ddd" stroke-width=".9" /><path d="M.5 10.500c0-4 5-4 5 0M5.500 5c1.500-1.500 4-1 4 2" fill="none" stroke="#ddd" stroke-width=".9" /></svg></button>
        <button class="w-[24px] flex justify-center" aria-label="Hidden icons"><svg class="w-[8px] h-[5px]" viewBox="0 0 8 5"><path d="M.5 4.500L4 1l3.500 3.500" fill="none" stroke="#eee" stroke-width="1.100" /></svg></button>
        <button class="w-[17px] flex justify-center" aria-label="OneDrive"><svg class="w-[11px] h-[8px]" viewBox="0 0 11 8"><path d="M2 7.500a2 2 0 0 1 0-4C2.500 1 5.500 0 7 2c2-.3 2.500 1.500 2.300 2.300C11.500 5 11 7.500 9.500 7.500z" fill="#777" /></svg></button>
        <time class="w-[43px] text-center leading-[11px]">7:30 PM<br />3/25/2019</time>
        <button class="relative w-[30px] h-full" aria-label="Notifications"><svg class="absolute left-[6px] top-[8px] w-[10px] h-[10px]" viewBox="0 0 10 10"><path d="M0 0h10v8H4L2.500 10V8H0z" fill="#fff" /><path d="M2 2.500h6M2 4.500h6" stroke="#444" stroke-width=".8" /></svg><span class="absolute left-[11px] top-[12px] w-[11px] h-[11px] rounded-full bg-[#444] border border-[#888] leading-[9px] text-center">12</span></button>
        <span class="w-px h-full mr-[2px] bg-[#444]"></span>
      </div>
    </footer>

    <script>
      const classes = [
        ["CS150", "MWF300", "EA304"], ["CS250", "MWF1200", "EB210"], ["FA180", "TTH830", "EW114"], ["ENG01", "MW1230", "EW20"],
        ["PS310", "TTH1000", "EW200"], ["BI200", "TTH330", "EW211"], ["ENG30", "TTH930", "EW230"], ["HS330", "TH1100", "EW230"],
        ["PH325", "MW200", "EW312"], ["BI209", "MW900", "EW414"], ["MT600", "TTH1100", "G12N"], ["BI105", "TTH230", "NW110"],
        ["CS450", "MWF100", "NW110"], ["MA450", "MW330", "NW110"], ["MT200", "MW130", "NW111"], ["CH550", "TTH630", "NW125"],
        ["EN220", "TTH304", "NW200"], ["MT150", "MW130", "NW209"], ["EN320", "MW530", "NW210"], ["ENG21", "MWF800", "NW211"],
        ["MI230", "TTH800", "NW211"], ["MT290", "TTH230", "NW211"], ["PH100", "MW1245", "NW215"], ["PS101", "MW1000", "NW315"],
        ["MT511", "TTH530", "NW412"], ["BA200", "MW900", "SC110"], ["BD445", "MWF300", "SC213"], ["BF410", "MWF800", "SC213"],
      ];
      const plus =
        '<button class="block mx-auto" aria-label="Expand"><svg class="w-[7px] h-[7px]" viewBox="0 0 7 7"><path d="M.5.5h6v6h-6z" fill="#fff" stroke="#bbb"/><path d="M3 2h1v1h1v1H4v1H3V4H2V3h1z" fill="#111"/></svg></button>';
      const empty = '<td class="border-r border-b border-[#f3f3f5]"></td>'.repeat(9) + '<td class="border-b border-[#f3f3f5]"></td>';

      document.getElementById("rows").innerHTML = classes
        .map(([name, time, room], i) => {
          const current = i === 0;
          let bg = i % 2 ? "bg-[#f2f2f2]" : "bg-white";
          if (current) bg = "bg-[#a5cdf0]";
          const cell = `p-0 pl-[2px] border-r border-b border-[#d3d8e6] ${bg}`;
          const nameCell = current
            ? '<td class="p-0 pl-px border border-[#f2a5a8] bg-white"><span class="block w-[23px] bg-black text-white">' + name + "</span></td>"
            : `<td class="${cell}">${name}</td>`;
          return `<tr class="h-[13px] nth-[5n]:h-[12px]">
            <td class="p-0 border-r border-b border-[#c3cad6] ${current ? "bg-[#fdd95a]" : "bg-[#d9dde4]"}"></td>
            <td class="p-0 border-b border-[#d3d8e6] ${i % 2 ? "bg-[#f2f2f2]" : "bg-white"}">${plus}</td>
            ${nameCell}<td class="${cell}">${time}</td><td class="${cell}">${room}</td><td class="${cell}"></td>${empty}
          </tr>`;
        })
        .join("");
    </script>
  </body>
</html>
